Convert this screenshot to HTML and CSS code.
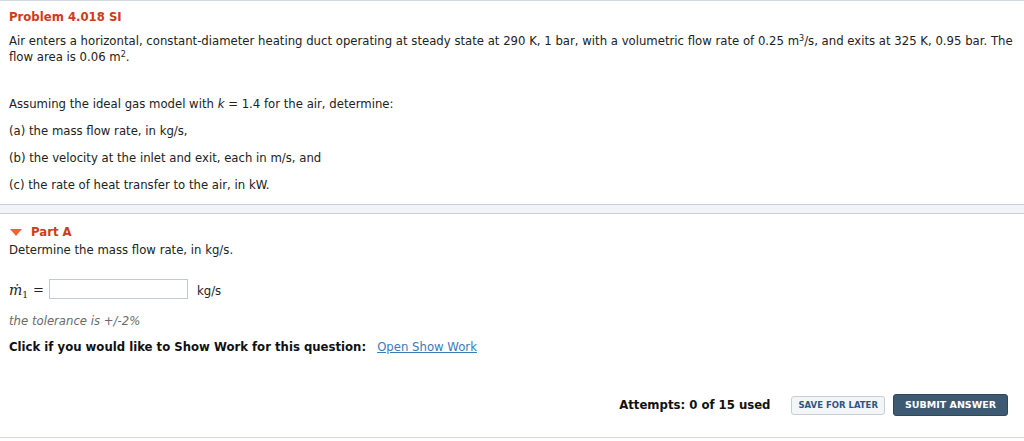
FILE: index.html
```html
<!DOCTYPE html>
<html>
<head>
<meta charset="utf-8">
<link rel="stylesheet" href="styles.css">
</head>
<body>
<div class="problem">
  <h1 class="title">Problem 4.018 SI</h1>
  <p class="intro">Air enters a horizontal, constant-diameter heating duct operating at steady state at 290 K, 1 bar, with a volumetric flow rate of 0.25 m<sup>3</sup>/s, and exits at 325 K, 0.95 bar. The flow area is 0.06 m<sup>2</sup>.</p>
  <p class="assume">Assuming the ideal gas model with <i>k</i> = 1.4 for the air, determine:</p>
  <p class="item">(a) the mass flow rate, in kg/s,</p>
  <p class="item">(b) the velocity at the inlet and exit, each in m/s, and</p>
  <p class="item">(c) the rate of heat transfer to the air, in kW.</p>
</div>
<div class="sep"></div>
<div class="part">
  <div class="part-head"><span class="tri"></span><span class="part-title">Part A</span></div>
  <p class="question">Determine the mass flow rate, in kg/s.</p>
  <div class="answer-row">
    <span class="math"><i>ṁ</i><sub>1</sub></span><span class="eq">=</span>
    <span class="input"></span>
    <span class="unit">kg/s</span>
  </div>
  <p class="tol">the tolerance is +/-2%</p>
  <p class="work"><b>Click if you would like to Show Work for this question:</b><a class="link" href="#">Open Show Work</a></p>
  <div class="actions">
    <span class="attempts">Attempts: 0 of 15 used</span>
    <span class="btn save">SAVE FOR LATER</span>
    <span class="btn submit">SUBMIT ANSWER</span>
  </div>
</div>
<div class="bottom"></div>
</body>
</html>
```
FILE: styles.css
```css
html, body { margin: 0; padding: 0; background: #fff; }
body {
  font-family: "DejaVu Sans", Verdana, sans-serif;
  font-size: 11.7px;
  line-height: 16px;
  color: #222;
  width: 1024px;
}
p { margin: 0; }
sup { font-size: 8px; line-height: 0; vertical-align: 4px; }
.problem {
  border-top: 1px solid #cfd7e0;
  padding: 8px 9px 10px;
}
.title {
  margin: 0;
  font-size: 11.7px;
  line-height: 16px;
  font-weight: bold;
  color: #d2391a;
}
.intro { margin-top: 8px; }
.assume { margin-top: 31px; }
.item { margin-top: 11px; }
.sep {
  height: 8px;
  margin-top: 1px;
  background: #f1f5f9;
  border-top: 1px solid #c6d0da;
  border-bottom: 1px solid #c6d0da;
}
.part { padding: 10px 9px 0; }
.part-head { display: flex; align-items: center; height: 16px; }
.tri {
  width: 0; height: 0;
  border-left: 6px solid transparent;
  border-right: 6px solid transparent;
  border-top: 7px solid #f0632a;
  margin: 1px 9px 0 1px;
}
.part-title { font-weight: bold; color: #d2391a; }
.question { margin-top: 2px; }
.answer-row {
  display: flex;
  align-items: center;
  margin-top: 21px;
  height: 20px;
}
.math {
  font-family: "DejaVu Serif", "Liberation Serif", serif;
  font-size: 14px;
  width: 24px;
  padding-top: 2px;
}
.math sub { font-size: 9px; font-style: normal; vertical-align: -3px; line-height: 0; }
.eq { font-family: "DejaVu Sans", sans-serif; font-size: 13px; width: 9px; margin-right: 7px; padding-top: 2px; }
.input {
  width: 137px;
  height: 18px;
  border: 1px solid #c4c9ce;
  background: #fff;
  box-sizing: content-box;
}
.unit { margin-left: 9px; padding-top: 4px; }
.tol { margin-top: 14px; font-style: italic; color: #6a6a6a; }
.work { margin-top: 10px; color: #111; }
.link { margin-left: 11px; color: #3a7bb8; text-decoration: underline; }
.actions {
  display: flex;
  align-items: center;
  justify-content: flex-end;
  margin-top: 38px;
  padding-right: 7px;
  height: 24px;
}
.attempts { font-weight: bold; color: #111; margin-right: 21px; }
.btn {
  font-weight: bold;
  font-size: 8.5px;
  border-radius: 3px;
  display: inline-flex;
  align-items: center;
  justify-content: center;
}
.save {
  height: 17px;
  padding: 0 6px;
  background: #f3f6f9;
  border: 1px solid #c7ced6;
  color: #2e5583;
}
.submit {
  margin-left: 8px;
  height: 20px;
  padding: 0 11px;
  background: #3e5a73;
  border: 1px solid #2f475c;
  color: #fff;
  font-size: 9.5px;
}
.bottom {
  margin-top: 20px;
  border-top: 1px solid #cfd7e0;
}
```
